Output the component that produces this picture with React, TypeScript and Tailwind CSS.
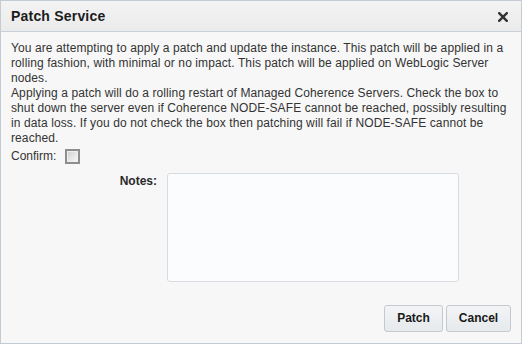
import React from "react";

function CloseIcon() {
    return (
        <svg width="10" height="10" viewBox="0 0 10 10" className="block">
            <path d="M1.2 1.2 L8.8 8.8 M8.8 1.2 L1.2 8.8" stroke="#333" strokeWidth="2.4" strokeLinecap="square" />
        </svg>
    );
}

export default function App() {
    return (
        <div
            className="w-[522px] h-[344px] flex flex-col border border-[#c3ccd6] bg-[#f7f7f7] text-[#333] text-[12px] leading-[15px]"
            style={{ fontFamily: '"Liberation Sans", Arial, sans-serif' }}
        >
            {/* Header */}
            <div className="h-[31px] shrink-0 flex items-center justify-between pl-[10px] pr-[13px] bg-gradient-to-b from-[#f3f3f3] to-[#ebebeb] border-b border-[#c9d0d8]">
                <h2 className="text-[14px] font-bold text-[#1c1c1c] pt-[1px] tracking-[0.2px]">Patch Service</h2>
                <button className="p-0 pt-[1px]" title="Close">
                    <CloseIcon />
                </button>
            </div>

            {/* Body */}
            <div className="flex-1 flex flex-col pl-[10px] pr-[10px] pt-[9px]">
                <p className="tracking-[0.1px] pr-[3px]">
                    You are attempting to apply a patch and update the instance. This patch will be applied in a rolling fashion, with minimal or no impact. This patch will be applied on WebLogic Server nodes.
                    <br />
                    Applying a patch will do a rolling restart of Managed Coherence Servers. Check the box to shut down the server even if Coherence NODE-SAFE cannot be reached, possibly resulting in data loss. If you do not check the box then patching will fail if NODE-SAFE cannot be reached.
                </p>

                <div className="h-[20px] flex items-center gap-[9px]">
                    <span>Confirm:</span>
                    <span className="w-[15px] h-[15px] border-2 border-[#8e8e8e] bg-gradient-to-br from-[#cfcfcf] to-[#fafafa] shadow-[inset_0_0_0_1px_#efefef]" />
                </div>

                <div className="flex items-start mt-[7px]">
                    <label className="w-[146px] text-right font-bold text-[#2a2a2a] pt-[1px]">Notes:</label>
                    <textarea className="ml-[10px] w-[292px] h-[109px] resize-none rounded-[3px] border border-[#d8dce1] bg-[#fbfcfe] outline-none" />
                </div>

                <div className="mt-auto flex justify-end gap-[3px] pb-[11px]">
                    <button className="w-[59px] h-[27px] rounded-[3px] border border-[#c4c9ce] bg-gradient-to-b from-[#f2f4f6] to-[#e7eaed] font-bold text-[#1a1a1a]">
                        Patch
                    </button>
                    <button className="w-[65px] h-[27px] rounded-[3px] border border-[#c4c9ce] bg-gradient-to-b from-[#f2f4f6] to-[#e7eaed] font-bold text-[#1a1a1a]">
                        Cancel
                    </button>
                </div>
            </div>
        </div>
    );
}
